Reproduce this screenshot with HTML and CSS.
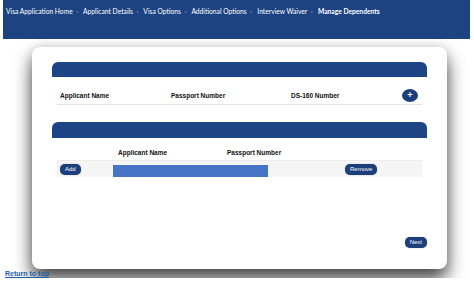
FILE: index.html
```html
<!DOCTYPE html>
<html lang="en">
<head>
  <meta charset="UTF-8">
  <meta name="viewport" content="width=device-width, initial-scale=1.0">
  <title>Manage Dependents</title>
  <link rel="stylesheet" href="styles.css">
</head>
<body>
  <header>
    <nav class="crumbs">
      <a href="#">Visa Application Home</a><span class="sep">&gt;</span>
      <a href="#">Applicant Details</a><span class="sep">&gt;</span>
      <a href="#">Visa Options</a><span class="sep">&gt;</span>
      <a href="#">Additional Options</a><span class="sep">&gt;</span>
      <a href="#">Interview Waiver</a><span class="sep">&gt;</span>
      <strong>Manage Dependents</strong>
    </nav>
  </header>
  <main class="card">
    <div class="bar"></div>
    <div class="row head-row first">
      <span>Applicant Name</span>
      <span>Passport Number</span>
      <span>DS-160 Number</span>
      <button class="plus">+</button>
    </div>

    <div class="bar second"></div>
    <div class="row dep-head">
      <span></span>
      <span>Applicant Name</span>
      <span>Passport Number</span>
      <span></span>
    </div>
    <div class="row dep-row">
      <span><button class="btn">Add</button></span>
      <span class="field"></span>
      <span></span>
      <span><button class="btn">Remove</button></span>
    </div>

    <div class="actions">
      <button class="btn">Next</button>
    </div>
  </main>
  <a href="#" class="top-link">Return to top</a>
</body>
</html>
```

FILE: styles.css
```css
body {
  margin: 0;
  padding: 0;
  background: #fff;
  font-family: "Liberation Sans", Arial, sans-serif;
}
header {
  background: #1d4382;
  height: 39px;
  margin: 0 4px 0 3px;
}
.crumbs {
  padding: 7px 0 0 3px;
  font-family: "Lato", "Liberation Sans", sans-serif;
  font-size: 6.7px;
  color: #fff;
  white-space: nowrap;
}
.crumbs a {
  color: #fff;
  text-decoration: none;
}
.crumbs .sep {
  color: #8a9cbd;
  margin: 0 3px;
  font-size: 5px;
}
.crumbs strong {
  font-weight: bold;
}
.card {
  display: block;
  background: #fff;
  margin: 8px 27px 0 32px;
  height: 207px;
  padding: 15px 20px 0 20px;
  border-radius: 8px;
  box-shadow: 0 11px 18px rgba(0,0,0,0.7), 0 0 12px rgba(0,0,0,0.15);
}
.bar {
  background: #1d4586;
  height: 15px;
  border-radius: 6px 6px 0 0;
}
.bar.second {
  margin-top: 17px;
  height: 16px;
}
.row {
  display: grid;
  align-items: center;
  margin: 0 5px;
  font-size: 6.5px;
  font-weight: bold;
  color: #111;
}
.head-row {
  grid-template-columns: 111px 120px 114px 1fr;
  margin-top: 10px;
  height: 17px;
  border-bottom: 1px solid #e3e3e3;
}
.head-row span {
  padding-left: 3px;
}
.dep-head {
  grid-template-columns: 56px 109px 1fr;
  margin-top: 9px;
  height: 13px;
  border-bottom: 1px solid #ececec;
}
.dep-head span {
  padding-left: 5px;
}
.dep-row {
  grid-template-columns: 56px 155px 77px 1fr;
  height: 16px;
  background: #f5f5f5;
}
.dep-row span:first-child {
  padding-left: 3px;
}
.field {
  background: #4673c6;
  height: 12px;
  align-self: end;
}
.btn {
  background: #1c3f7c;
  color: #fff;
  border: none;
  border-radius: 5px;
  font-family: "Liberation Sans", Arial, sans-serif;
  font-size: 6px;
  height: 11px;
  padding: 0 5px;
  line-height: 11px;
  box-shadow: 0 0 1px rgba(0,0,0,0.5);
}
.plus {
  background: #1c3f7c;
  color: #fff;
  border: none;
  width: 16px;
  height: 13px;
  border-radius: 50%;
  padding: 0;
  font-size: 9px;
  font-weight: bold;
  line-height: 13px;
  font-family: "Liberation Sans", Arial, sans-serif;
}
.actions {
  display: flex;
  justify-content: flex-end;
  margin-top: 60px;
}
.top-link {
  display: block;
  width: max-content;
  margin: 1px 0 0 5px;
  font-size: 7px;
  line-height: 8px;
  color: #1f5fa6;
  font-weight: bold;
}
```
